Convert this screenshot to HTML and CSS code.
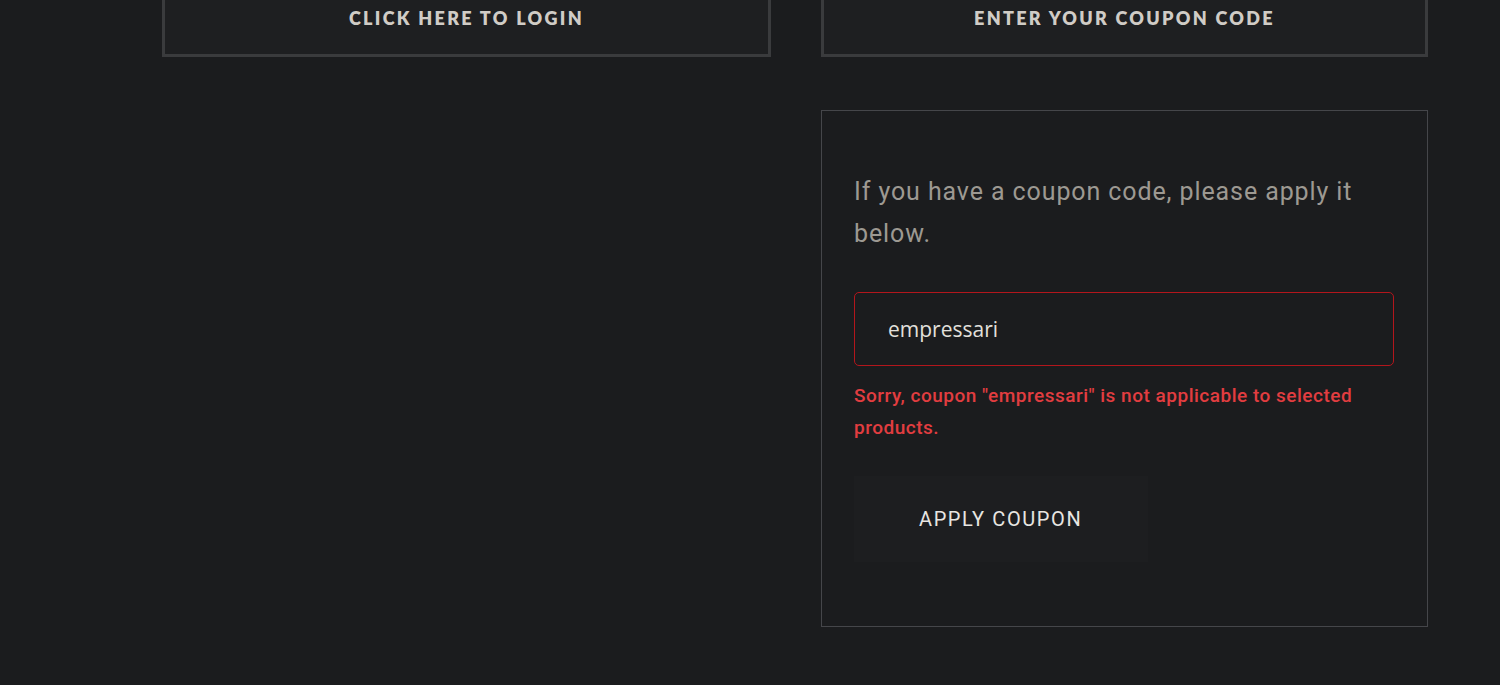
FILE: index.html
```html
<!DOCTYPE html>
<html>
<head>
<meta charset="utf-8">
<link rel="stylesheet" href="styles.css">
</head>
<body>
<div class="page">
  <div class="col">
    <div class="toggle">Click here to login</div>
  </div>
  <div class="col">
    <div class="toggle">Enter your coupon code</div>
    <div class="panel">
      <p class="intro">If you have a coupon code, please apply it below.</p>
      <div class="input">empressari</div>
      <p class="error">Sorry, coupon "empressari" is not applicable to selected products.</p>
      <div class="apply">Apply coupon</div>
    </div>
  </div>
</div>
</body>
</html>
```
FILE: styles.css
```css
html, body {
  margin: 0;
  padding: 0;
  background: #1b1c1e;
  height: 100%;
  overflow: hidden;
}
.page {
  display: grid;
  grid-template-columns: 609px 607px;
  column-gap: 50px;
  padding-left: 162px;
  margin-top: -22px;
  font-family: Roboto, "Liberation Sans", sans-serif;
}
.toggle {
  box-sizing: border-box;
  height: 79px;
  border: 3px solid #3a3b3d;
  background: #1e1f21;
  color: #d0ccc6;
  font-family: Lato, "Liberation Sans", sans-serif;
  font-weight: 800;
  font-size: 18px;
  letter-spacing: 2.3px;
  text-transform: uppercase;
  display: flex;
  align-items: center;
  justify-content: center;
}
.panel {
  box-sizing: border-box;
  margin-top: 53px;
  height: 517px;
  border: 1px solid #45464a;
  padding: 60px 33px 0 32px;
}
.intro {
  margin: 0;
  color: #9d9992;
  font-size: 25px;
  line-height: 42px;
  letter-spacing: 0.9px;
}
.input {
  box-sizing: border-box;
  margin-top: 37px;
  height: 74px;
  border: 1.5px solid #b3161c;
  border-radius: 5px;
  padding-left: 33px;
  display: flex;
  align-items: center;
  color: #e2e0dc;
  font-family: "Open Sans", sans-serif;
  font-weight: 500;
  font-size: 21px;
}
.error {
  margin: 14px 0 0;
  color: #e23d40;
  font-weight: 500;
  font-size: 19px;
  line-height: 32px;
  letter-spacing: 0.5px;
}
.apply {
  margin-top: 32px;
  width: 294px;
  height: 86px;
  box-sizing: border-box;
  background: #1d1e20;
  padding-left: 65px;
  display: flex;
  align-items: center;
  color: #e8e6e2;
  font-size: 20px;
  letter-spacing: 1.6px;
  text-transform: uppercase;
}
```
